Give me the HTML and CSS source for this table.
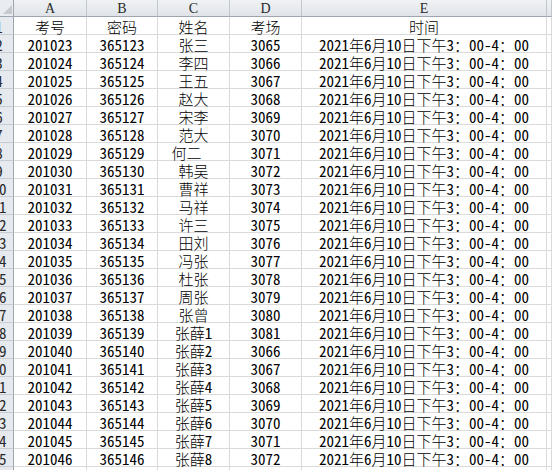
FILE: index.html
```html
<!DOCTYPE html>
<html lang="zh">
<head>
<meta charset="utf-8">
<title>Sheet</title>
<link rel="stylesheet" href="styles.css">
</head>
<body>
<div class="sheet">
  <div class="row head">
    <div class="corner"><svg width="13" height="16" viewBox="0 0 13 16"><polygon points="3,14 12,14 12,5" fill="#c6cad0"/></svg></div>
    <div>A</div><div>B</div><div>C</div><div>D</div><div>E</div><div></div>
  </div>
  <div class="row"><div class="rh"><span>1</span></div><div><span class="h">考号</span></div><div><span class="h">密码</span></div><div><span class="h">姓名</span></div><div><span class="h">考场</span></div><div><span class="h">时间</span></div><div></div></div>
  <div class="row"><div class="rh"><span>2</span></div><div>201023</div><div>365123</div><div><span class="h">张三</span></div><div>3065</div><div>2021<span class="h">年</span>6<span class="h">月</span>10<span class="h">日下午</span>3<span class="h">：</span>00-4<span class="h">：</span>00</div><div></div></div>
  <div class="row"><div class="rh"><span>3</span></div><div>201024</div><div>365124</div><div><span class="h">李四</span></div><div>3066</div><div>2021<span class="h">年</span>6<span class="h">月</span>10<span class="h">日下午</span>3<span class="h">：</span>00-4<span class="h">：</span>00</div><div></div></div>
  <div class="row"><div class="rh"><span>4</span></div><div>201025</div><div>365125</div><div><span class="h">王五</span></div><div>3067</div><div>2021<span class="h">年</span>6<span class="h">月</span>10<span class="h">日下午</span>3<span class="h">：</span>00-4<span class="h">：</span>00</div><div></div></div>
  <div class="row"><div class="rh"><span>5</span></div><div>201026</div><div>365126</div><div><span class="h">赵大</span></div><div>3068</div><div>2021<span class="h">年</span>6<span class="h">月</span>10<span class="h">日下午</span>3<span class="h">：</span>00-4<span class="h">：</span>00</div><div></div></div>
  <div class="row"><div class="rh"><span>6</span></div><div>201027</div><div>365127</div><div><span class="h">宋李</span></div><div>3069</div><div>2021<span class="h">年</span>6<span class="h">月</span>10<span class="h">日下午</span>3<span class="h">：</span>00-4<span class="h">：</span>00</div><div></div></div>
  <div class="row"><div class="rh"><span>7</span></div><div>201028</div><div>365128</div><div><span class="h">范大</span></div><div>3070</div><div>2021<span class="h">年</span>6<span class="h">月</span>10<span class="h">日下午</span>3<span class="h">：</span>00-4<span class="h">：</span>00</div><div></div></div>
  <div class="row"><div class="rh"><span>8</span></div><div>201029</div><div>365129</div><div><span class="h shift">何二</span></div><div>3071</div><div>2021<span class="h">年</span>6<span class="h">月</span>10<span class="h">日下午</span>3<span class="h">：</span>00-4<span class="h">：</span>00</div><div></div></div>
  <div class="row"><div class="rh"><span>9</span></div><div>201030</div><div>365130</div><div><span class="h">韩吴</span></div><div>3072</div><div>2021<span class="h">年</span>6<span class="h">月</span>10<span class="h">日下午</span>3<span class="h">：</span>00-4<span class="h">：</span>00</div><div></div></div>
  <div class="row"><div class="rh"><span>10</span></div><div>201031</div><div>365131</div><div><span class="h">曹祥</span></div><div>3073</div><div>2021<span class="h">年</span>6<span class="h">月</span>10<span class="h">日下午</span>3<span class="h">：</span>00-4<span class="h">：</span>00</div><div></div></div>
  <div class="row"><div class="rh"><span>11</span></div><div>201032</div><div>365132</div><div><span class="h">马祥</span></div><div>3074</div><div>2021<span class="h">年</span>6<span class="h">月</span>10<span class="h">日下午</span>3<span class="h">：</span>00-4<span class="h">：</span>00</div><div></div></div>
  <div class="row"><div class="rh"><span>12</span></div><div>201033</div><div>365133</div><div><span class="h">许三</span></div><div>3075</div><div>2021<span class="h">年</span>6<span class="h">月</span>10<span class="h">日下午</span>3<span class="h">：</span>00-4<span class="h">：</span>00</div><div></div></div>
  <div class="row"><div class="rh"><span>13</span></div><div>201034</div><div>365134</div><div><span class="h">田刘</span></div><div>3076</div><div>2021<span class="h">年</span>6<span class="h">月</span>10<span class="h">日下午</span>3<span class="h">：</span>00-4<span class="h">：</span>00</div><div></div></div>
  <div class="row"><div class="rh"><span>14</span></div><div>201035</div><div>365135</div><div><span class="h">冯张</span></div><div>3077</div><div>2021<span class="h">年</span>6<span class="h">月</span>10<span class="h">日下午</span>3<span class="h">：</span>00-4<span class="h">：</span>00</div><div></div></div>
  <div class="row"><div class="rh"><span>15</span></div><div>201036</div><div>365136</div><div><span class="h">杜张</span></div><div>3078</div><div>2021<span class="h">年</span>6<span class="h">月</span>10<span class="h">日下午</span>3<span class="h">：</span>00-4<span class="h">：</span>00</div><div></div></div>
  <div class="row"><div class="rh"><span>16</span></div><div>201037</div><div>365137</div><div><span class="h">周张</span></div><div>3079</div><div>2021<span class="h">年</span>6<span class="h">月</span>10<span class="h">日下午</span>3<span class="h">：</span>00-4<span class="h">：</span>00</div><div></div></div>
  <div class="row"><div class="rh"><span>17</span></div><div>201038</div><div>365138</div><div><span class="h">张曾</span></div><div>3080</div><div>2021<span class="h">年</span>6<span class="h">月</span>10<span class="h">日下午</span>3<span class="h">：</span>00-4<span class="h">：</span>00</div><div></div></div>
  <div class="row"><div class="rh"><span>18</span></div><div>201039</div><div>365139</div><div><span class="h">张薛</span>1</div><div>3081</div><div>2021<span class="h">年</span>6<span class="h">月</span>10<span class="h">日下午</span>3<span class="h">：</span>00-4<span class="h">：</span>00</div><div></div></div>
  <div class="row"><div class="rh"><span>19</span></div><div>201040</div><div>365140</div><div><span class="h">张薛</span>2</div><div>3066</div><div>2021<span class="h">年</span>6<span class="h">月</span>10<span class="h">日下午</span>3<span class="h">：</span>00-4<span class="h">：</span>00</div><div></div></div>
  <div class="row"><div class="rh"><span>20</span></div><div>201041</div><div>365141</div><div><span class="h">张薛</span>3</div><div>3067</div><div>2021<span class="h">年</span>6<span class="h">月</span>10<span class="h">日下午</span>3<span class="h">：</span>00-4<span class="h">：</span>00</div><div></div></div>
  <div class="row"><div class="rh"><span>21</span></div><div>201042</div><div>365142</div><div><span class="h">张薛</span>4</div><div>3068</div><div>2021<span class="h">年</span>6<span class="h">月</span>10<span class="h">日下午</span>3<span class="h">：</span>00-4<span class="h">：</span>00</div><div></div></div>
  <div class="row"><div class="rh"><span>22</span></div><div>201043</div><div>365143</div><div><span class="h">张薛</span>5</div><div>3069</div><div>2021<span class="h">年</span>6<span class="h">月</span>10<span class="h">日下午</span>3<span class="h">：</span>00-4<span class="h">：</span>00</div><div></div></div>
  <div class="row"><div class="rh"><span>23</span></div><div>201044</div><div>365144</div><div><span class="h">张薛</span>6</div><div>3070</div><div>2021<span class="h">年</span>6<span class="h">月</span>10<span class="h">日下午</span>3<span class="h">：</span>00-4<span class="h">：</span>00</div><div></div></div>
  <div class="row"><div class="rh"><span>24</span></div><div>201045</div><div>365145</div><div><span class="h">张薛</span>7</div><div>3071</div><div>2021<span class="h">年</span>6<span class="h">月</span>10<span class="h">日下午</span>3<span class="h">：</span>00-4<span class="h">：</span>00</div><div></div></div>
  <div class="row"><div class="rh"><span>25</span></div><div>201046</div><div>365146</div><div><span class="h">张薛</span>8</div><div>3072</div><div>2021<span class="h">年</span>6<span class="h">月</span>10<span class="h">日下午</span>3<span class="h">：</span>00-4<span class="h">：</span>00</div><div></div></div>
  <div class="row"><div class="rh"><span>26</span></div><div>201047</div><div>365147</div><div><span class="h">张薛</span>9</div><div>3073</div><div>2021<span class="h">年</span>6<span class="h">月</span>10<span class="h">日下午</span>3<span class="h">：</span>00-4<span class="h">：</span>00</div><div></div></div>
</div>
</body>
</html>
```

FILE: styles.css
```css
* {
  box-sizing: border-box;
  margin: 0;
  padding: 0;
}

html, body {
  width: 552px;
  height: 470px;
  overflow: hidden;
  background: #ffffff;
}

body {
  font-family: "Noto Sans Mono CJK SC", "DejaVu Sans Mono", "Noto Sans CJK SC", monospace;
  font-size: 15px;
  font-weight: 350;
  line-height: 15px;
  color: #000000;
}

.sheet {
  display: flex;
  flex-direction: column;
}

.row {
  display: grid;
  grid-template-columns: 14px 73px 71px 72px 72px 245px 1fr;
  height: 18px;
  flex: 0 0 auto;
}

.row > div {
  display: flex;
  align-items: center;
  justify-content: center;
  padding-top: 1px;
  white-space: nowrap;
  border-right: 1px solid #dadada;
  border-bottom: 1px solid #dadada;
}

.h {
  font-family: "Noto Sans CJK SC", sans-serif;
  font-size: 15px;
  font-weight: 300;
}

.shift {
  margin-right: 14px;
}

.head {
  height: 17px;
}

.head > div {
  background: linear-gradient(#f0f2f5, #e0e4e9);
  border-right-color: #c2c7ce;
  border-bottom-color: #9ea5ae;
  font-family: "Liberation Serif", serif;
  font-size: 14px;
  font-weight: 400;
  color: #2a2a2a;
  padding-top: 1px;
}

.head > .corner {
  background: #e9ecf0;
  border-right-color: #9ea5ae;
  padding-top: 0;
}

.row > .rh {
  justify-content: flex-start;
  overflow: hidden;
  background: #e6e9ee;
  border-right-color: #9ea5ae;
  border-bottom-color: #c7ccd3;
  color: #2a2a2a;
}

.rh span {
  flex: 0 0 28px;
  margin-left: -15px;
  text-align: center;
}
```
